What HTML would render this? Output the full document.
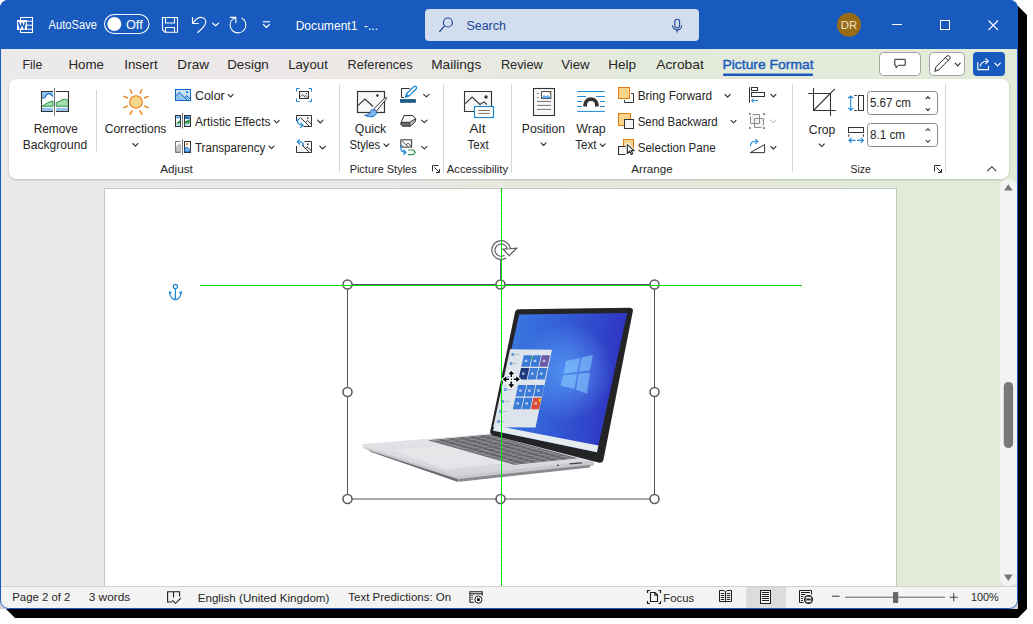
<!DOCTYPE html>
<html><head><meta charset="utf-8"><style>html,body{margin:0;padding:0;background:#fff;width:1033px;height:624px;overflow:hidden}svg{display:block}</style></head>
<body><svg width="1033" height="624" viewBox="0 0 1033 624" font-family='"Liberation Sans", sans-serif'><path d="M15 6 H1018 L1027 15 V609 L1018 618 H15 L6 609 V15 Z" fill="#000"/><rect x="0" y="598" width="10" height="11" fill="#cdcdcd"/><rect x="1008" y="598" width="10" height="11" fill="#cdcdcd"/><defs><linearGradient id="bg" x1="0" x2="1" y1="0" y2="0"><stop offset="0" stop-color="#ece9ea"/><stop offset="0.38" stop-color="#ebe8e6"/><stop offset="0.62" stop-color="#e4eadb"/><stop offset="1" stop-color="#e2ebd8"/></linearGradient><clipPath id="winclip"><rect x="0" y="0" width="1018" height="609" rx="8"/></clipPath><filter id="rs" x="-5%" y="-20%" width="110%" height="140%"><feDropShadow dx="0" dy="1" stdDeviation="1.3" flood-color="#000" flood-opacity="0.2"/></filter></defs><g clip-path="url(#winclip)"><rect x="0" y="0" width="1018" height="609" fill="url(#bg)"/><rect x="0" y="0" width="1018" height="49" fill="#185abd"/><rect x="9" y="79" width="1000" height="100" rx="8" fill="#fff" filter="url(#rs)"/><rect x="104.5" y="188.5" width="792" height="420" fill="#fff" stroke="#c6c6c6" stroke-width="1"/><rect x="1000" y="179" width="17" height="407" rx="8" fill="#f3f3f3"/><rect x="1003.8" y="382" width="9.3" height="66" rx="4.6" fill="#787878"/><path d="M1004 190.5 L1008.3 184.2 L1012.7 190.5 Z" fill="#777"/><path d="M1004 574.5 L1008.3 581 L1012.7 574.5 Z" fill="#777"/><rect x="0" y="586" width="1018" height="23" fill="#f3f3f3"/><rect x="0" y="586" width="1018" height="1" fill="#d2d2d2"/><circle cx="175.4" cy="286.4" r="2.1" fill="none" stroke="#2186d4" stroke-width="1.2"/><path d="M175.4 288.5 V299.6 M169.6 292.2 C169.8 296.8, 172.5 299.6, 175.4 299.6 C178.3 299.6, 181 296.8, 181.2 292.2" fill="none" stroke="#2186d4" stroke-width="1.2"/><path d="M169 290.6 L172.2 293 L169.2 294 Z M181.8 290.6 L178.6 293 L181.6 294 Z" fill="#2186d4"/><defs><linearGradient id="scr" x1="0" y1="0.3" x2="1" y2="0.45"><stop offset="0" stop-color="#3c80e2"/><stop offset="0.45" stop-color="#3460d8"/><stop offset="1" stop-color="#2e30c0"/></linearGradient><radialGradient id="glow" cx="0.55" cy="0.42" r="0.35"><stop offset="0" stop-color="#5aa6ff" stop-opacity="0.7"/><stop offset="1" stop-color="#6cb6ff" stop-opacity="0"/></radialGradient><linearGradient id="base" x1="0" y1="0" x2="0" y2="1"><stop offset="0" stop-color="#e6e6ea"/><stop offset="1" stop-color="#d2d3d8"/></linearGradient></defs><path d="M362.6 444.5 L490 434 L594 460.5 L594 465.5 L458 481.5 L369 451 Z" fill="#bfc0c5"/><path d="M369 450.5 L458 479 L458 482 L371 452 Z" fill="#6d6e74"/><path d="M458.5 478.5 L590 465 L590 467.5 L459 481.8 Z" fill="#8a8b90"/><path d="M362.6 444 L490 434 L594 460.5 L457 476.5 L362.6 446.5 Z" fill="url(#base)"/><path d="M362.6 446.5 L457 476.5 L594 460.5 L594 463.5 L458 479 L364 448.5 Z" fill="#c9cace"/><path d="M392 450 L450 444.5 L505 463 L445 469.5 Z" fill="#e9e9ed" opacity="0.7"/><path d="M428 440.2 L490 434.5 L577.5 458.3 L514 464.7 Z" fill="#606066"/><path d="M430.5 440.2 L437.2 439.6 L441.5 440.9 L434.9 441.5ZM440.9 439.3 L447.5 438.7 L451.9 439.9 L445.3 440.5ZM451.2 438.3 L457.8 437.7 L462.2 438.9 L455.6 439.6ZM461.6 437.4 L468.2 436.8 L472.6 438.0 L466.0 438.6ZM471.9 436.4 L478.5 435.8 L482.9 437.0 L476.3 437.6ZM482.2 435.5 L488.8 434.9 L493.3 436.1 L486.6 436.7ZM436.3 441.9 L442.9 441.2 L447.3 442.5 L440.6 443.1ZM446.6 440.9 L453.3 440.3 L457.6 441.5 L451.0 442.1ZM457.0 439.9 L463.6 439.3 L468.0 440.6 L461.4 441.2ZM467.3 439.0 L474.0 438.4 L478.4 439.6 L471.7 440.2ZM477.7 438.0 L484.3 437.4 L488.7 438.6 L482.1 439.2ZM488.0 437.1 L494.7 436.4 L499.1 437.7 L492.5 438.3ZM442.0 443.5 L448.7 442.9 L453.0 444.1 L446.4 444.7ZM452.4 442.5 L459.0 441.9 L463.4 443.1 L456.8 443.8ZM462.8 441.6 L469.4 440.9 L473.8 442.2 L467.1 442.8ZM473.1 440.6 L479.8 440.0 L484.2 441.2 L477.5 441.8ZM483.5 439.6 L490.1 439.0 L494.6 440.2 L487.9 440.8ZM493.9 438.7 L500.5 438.0 L504.9 439.2 L498.3 439.9ZM447.8 445.1 L454.4 444.5 L458.8 445.7 L452.1 446.4ZM458.1 444.1 L464.8 443.5 L469.2 444.8 L462.5 445.4ZM468.5 443.2 L475.2 442.5 L479.6 443.8 L472.9 444.4ZM478.9 442.2 L485.6 441.6 L490.0 442.8 L483.3 443.4ZM489.3 441.2 L495.9 440.6 L500.4 441.8 L493.7 442.4ZM499.7 440.2 L506.3 439.6 L510.8 440.8 L504.1 441.5ZM453.5 446.8 L460.2 446.1 L464.5 447.4 L457.9 448.0ZM463.9 445.8 L470.6 445.1 L474.9 446.4 L468.3 447.0ZM474.3 444.8 L481.0 444.2 L485.3 445.4 L478.7 446.0ZM484.7 443.8 L491.4 443.2 L495.8 444.4 L489.1 445.0ZM495.1 442.8 L501.8 442.2 L506.2 443.4 L499.5 444.0ZM505.5 441.8 L512.2 441.2 L516.6 442.4 L509.9 443.1ZM459.2 448.4 L465.9 447.8 L470.3 449.0 L463.6 449.6ZM469.6 447.4 L476.3 446.8 L480.7 448.0 L474.0 448.6ZM480.1 446.4 L486.7 445.8 L491.1 447.0 L484.5 447.6ZM490.5 445.4 L497.2 444.8 L501.6 446.0 L494.9 446.6ZM500.9 444.4 L507.6 443.8 L512.0 445.0 L505.3 445.6ZM511.3 443.4 L518.0 442.8 L522.4 444.0 L515.7 444.6ZM465.0 450.0 L471.6 449.4 L476.0 450.6 L469.3 451.3ZM475.4 449.0 L482.1 448.4 L486.5 449.6 L479.8 450.3ZM485.8 448.0 L492.5 447.4 L496.9 448.6 L490.2 449.2ZM496.3 447.0 L503.0 446.4 L507.4 447.6 L500.7 448.2ZM506.7 446.0 L513.4 445.4 L517.8 446.6 L511.1 447.2ZM517.1 445.0 L523.8 444.4 L528.3 445.6 L521.6 446.2ZM470.7 451.6 L477.4 451.0 L481.8 452.2 L475.1 452.9ZM481.2 450.6 L487.8 450.0 L492.2 451.2 L485.5 451.9ZM491.6 449.6 L498.3 449.0 L502.7 450.2 L496.0 450.9ZM502.1 448.6 L508.7 448.0 L513.2 449.2 L506.5 449.9ZM512.5 447.6 L519.2 447.0 L523.6 448.2 L516.9 448.8ZM523.0 446.6 L529.7 446.0 L534.1 447.2 L527.4 447.8ZM476.4 453.3 L483.1 452.6 L487.5 453.9 L480.8 454.5ZM486.9 452.3 L493.6 451.6 L498.0 452.8 L491.3 453.5ZM497.4 451.3 L504.1 450.6 L508.5 451.8 L501.8 452.5ZM507.8 450.2 L514.5 449.6 L519.0 450.8 L512.2 451.5ZM518.3 449.2 L525.0 448.6 L529.4 449.8 L522.7 450.4ZM528.8 448.2 L535.5 447.6 L539.9 448.8 L533.2 449.4ZM482.2 454.9 L488.9 454.3 L493.3 455.5 L486.5 456.2ZM492.7 453.9 L499.4 453.2 L503.8 454.5 L497.0 455.1ZM503.1 452.9 L509.9 452.2 L514.2 453.4 L507.5 454.1ZM513.6 451.8 L520.3 451.2 L524.7 452.4 L518.0 453.1ZM524.1 450.8 L530.8 450.2 L535.2 451.4 L528.5 452.0ZM534.6 449.8 L541.3 449.2 L545.7 450.4 L539.0 451.0ZM487.9 456.5 L494.6 455.9 L499.0 457.1 L492.3 457.8ZM498.4 455.5 L505.1 454.9 L509.5 456.1 L502.8 456.7ZM508.9 454.5 L515.6 453.8 L520.0 455.1 L513.3 455.7ZM519.4 453.5 L526.1 452.8 L530.5 454.0 L523.8 454.7ZM529.9 452.4 L536.6 451.8 L541.1 453.0 L534.3 453.6ZM540.4 451.4 L547.1 450.7 L551.6 451.9 L544.8 452.6ZM493.6 458.2 L500.4 457.5 L504.7 458.7 L498.0 459.4ZM504.2 457.1 L510.9 456.5 L515.3 457.7 L508.5 458.4ZM514.7 456.1 L521.4 455.4 L525.8 456.7 L519.1 457.3ZM525.2 455.1 L531.9 454.4 L536.3 455.6 L529.6 456.3ZM535.7 454.0 L542.5 453.4 L546.9 454.6 L540.1 455.2ZM546.2 453.0 L553.0 452.3 L557.4 453.5 L550.7 454.2ZM499.4 459.8 L506.1 459.1 L510.5 460.4 L503.7 461.0ZM509.9 458.8 L516.7 458.1 L521.0 459.3 L514.3 460.0ZM520.5 457.7 L527.2 457.1 L531.6 458.3 L524.8 458.9ZM531.0 456.7 L537.7 456.0 L542.1 457.2 L535.4 457.9ZM541.5 455.6 L548.3 455.0 L552.7 456.2 L545.9 456.8ZM552.1 454.6 L558.8 453.9 L563.2 455.1 L556.5 455.8ZM505.1 461.4 L511.9 460.8 L516.2 462.0 L509.5 462.7ZM515.7 460.4 L522.4 459.7 L526.8 460.9 L520.0 461.6ZM526.2 459.3 L533.0 458.7 L537.4 459.9 L530.6 460.6ZM536.8 458.3 L543.5 457.6 L547.9 458.8 L541.2 459.5ZM547.3 457.2 L554.1 456.6 L558.5 457.8 L551.7 458.4ZM557.9 456.2 L564.6 455.5 L569.1 456.7 L562.3 457.4ZM510.9 463.1 L517.6 462.4 L522.0 463.6 L515.2 464.3ZM521.4 462.0 L528.2 461.3 L532.6 462.6 L525.8 463.2ZM532.0 461.0 L538.8 460.3 L543.2 461.5 L536.4 462.2ZM542.6 459.9 L549.3 459.2 L553.7 460.4 L547.0 461.1ZM553.1 458.8 L559.9 458.2 L564.3 459.4 L557.5 460.0ZM563.7 457.8 L570.5 457.1 L574.9 458.3 L568.1 459.0Z" fill="#8c8c92"/><circle cx="557.8" cy="465.3" r="0.9" fill="#333"/><path d="M569.5 463.8 L582 462.8" stroke="#444" stroke-width="1.2"/><path d="M519 309.3 L629.5 307.8 Q633.5 307.8 632.8 311.5 L603.5 459.5 Q602.5 463.5 598.5 462.5 L493 435.5 Q489.5 434.5 490.3 431 L515 312.3 Q515.8 309.3 519 309.3 Z" fill="#242427"/><path d="M519.2 314.6 L627.2 312.9 L596.9 452.3 L493 430.6 Z" fill="url(#scr)"/><path d="M519.2 314.6 L627.2 312.9 L596.9 452.3 L493 430.6 Z" fill="url(#glow)"/><path d="M510 349.3 L552 349.8 L535.5 427.5 L493.2 427.3 Z" fill="#dde4ec"/><path d="M523.8 355.2 h8.2 l-2.51 11.6 h-8.2 Z" fill="#3b7ad6"/><rect x="524.7" y="359.7" width="2.6" height="2.4" fill="#fff" opacity="0.6"/><path d="M532.8 355.2 h8.2 l-2.51 11.6 h-8.2 Z" fill="#3b7ad6"/><rect x="533.7" y="359.7" width="2.6" height="2.4" fill="#fff" opacity="0.6"/><path d="M541.8 355.2 h8.2 l-2.51 11.6 h-8.2 Z" fill="#6a5aa8"/><rect x="542.7" y="359.7" width="2.6" height="2.4" fill="#fff" opacity="0.6"/><path d="M521.0 368.0 h8.2 l-2.51 11.6 h-8.2 Z" fill="#1d3a7e"/><rect x="522.0" y="372.5" width="2.6" height="2.4" fill="#fff" opacity="0.6"/><path d="M530.0 368.0 h8.2 l-2.51 11.6 h-8.2 Z" fill="#3b7ad6"/><rect x="531.0" y="372.5" width="2.6" height="2.4" fill="#fff" opacity="0.6"/><path d="M539.0 368.0 h8.2 l-2.51 11.6 h-8.2 Z" fill="#3b7ad6"/><rect x="540.0" y="372.5" width="2.6" height="2.4" fill="#fff" opacity="0.6"/><path d="M518.2 384.9 h8.2 l-2.51 11.6 h-8.2 Z" fill="#3b7ad6"/><rect x="519.1" y="389.4" width="2.6" height="2.4" fill="#fff" opacity="0.6"/><path d="M527.2 384.9 h8.2 l-2.51 11.6 h-8.2 Z" fill="#3b7ad6"/><rect x="528.1" y="389.4" width="2.6" height="2.4" fill="#fff" opacity="0.6"/><path d="M536.2 384.9 h8.2 l-2.51 11.6 h-8.2 Z" fill="#3b7ad6"/><rect x="537.1" y="389.4" width="2.6" height="2.4" fill="#fff" opacity="0.6"/><path d="M515.4 397.7 h8.2 l-2.51 11.6 h-8.2 Z" fill="#3b7ad6"/><rect x="516.4" y="402.2" width="2.6" height="2.4" fill="#fff" opacity="0.6"/><path d="M524.4 397.7 h8.2 l-2.51 11.6 h-8.2 Z" fill="#3b7ad6"/><rect x="525.4" y="402.2" width="2.6" height="2.4" fill="#fff" opacity="0.6"/><path d="M533.4 397.7 h8.2 l-2.51 11.6 h-8.2 Z" fill="#d84a3a"/><rect x="534.4" y="402.2" width="2.6" height="2.4" fill="#fff" opacity="0.6"/><rect x="538.5" y="399" width="2.4" height="2.8" fill="#e8c020"/><rect x="531" y="356.5" width="2.2" height="2.5" fill="#3fa050" opacity="0.9"/><rect x="511.6" y="353" width="2.6" height="3" fill="#4a8ad8" opacity="0.8"/><rect x="515.1" y="354" width="4" height="1" fill="#9aa8b8" opacity="0.7"/><rect x="509.7" y="362" width="2.6" height="3" fill="#4a8ad8" opacity="0.8"/><rect x="513.2" y="363" width="4" height="1" fill="#9aa8b8" opacity="0.7"/><rect x="506.7" y="376" width="2.6" height="3" fill="#4a8ad8" opacity="0.8"/><rect x="510.2" y="377" width="4" height="1" fill="#9aa8b8" opacity="0.7"/><rect x="504.1" y="388" width="2.6" height="3" fill="#4a8ad8" opacity="0.8"/><rect x="507.6" y="389" width="4" height="1" fill="#9aa8b8" opacity="0.7"/><rect x="501.5" y="400" width="2.6" height="3" fill="#4a8ad8" opacity="0.8"/><rect x="505.0" y="401" width="4" height="1" fill="#9aa8b8" opacity="0.7"/><rect x="499.3" y="410" width="2.6" height="3" fill="#4a8ad8" opacity="0.8"/><rect x="502.8" y="411" width="4" height="1" fill="#9aa8b8" opacity="0.7"/><rect x="497.2" y="420" width="2.6" height="3" fill="#4a8ad8" opacity="0.8"/><rect x="500.7" y="421" width="4" height="1" fill="#9aa8b8" opacity="0.7"/><path d="M493 430.6 L495.2 425.5 L598.5 445.5 L596.9 452.3 Z" fill="#e6ebf0"/><path d="M566 361 L580 358 L577.5 372 L563.5 373.5 Z M581.5 357.5 L593 355 L590 370.5 L579 371.8 Z M563 375.5 L577 374 L574.5 389 L560.5 385.5 Z M578.5 373.8 L590 372.5 L587 394 L576 389.5 Z" fill="#8fcfff" opacity="0.55"/><rect x="347.5" y="284.5" width="307" height="214.5" fill="none" stroke="#555" stroke-width="1"/><path d="M500.5 260 V284" stroke="#5c5c5c" stroke-width="1"/><path d="M508.83 248.48 A7.8 7.8 0 1 0 505.33 256.71" fill="none" stroke="#606060" stroke-width="4.4"/><path d="M503.2 249.2 L516.7 248.2 L509.1 255.6 Z" fill="#fff" stroke="#606060" stroke-width="1.3" stroke-linejoin="miter"/><path d="M508.83 248.48 A7.8 7.8 0 1 0 505.33 256.71" fill="none" stroke="#fff" stroke-width="2"/><circle cx="347.5" cy="284.5" r="4.5" fill="#fff" stroke="#5e5e5e" stroke-width="1.6"/><circle cx="347.5" cy="392" r="4.5" fill="#fff" stroke="#5e5e5e" stroke-width="1.6"/><circle cx="347.5" cy="499" r="4.5" fill="#fff" stroke="#5e5e5e" stroke-width="1.6"/><circle cx="500.5" cy="284.5" r="4.5" fill="#fff" stroke="#5e5e5e" stroke-width="1.6"/><circle cx="500.5" cy="499" r="4.5" fill="#fff" stroke="#5e5e5e" stroke-width="1.6"/><circle cx="654.5" cy="284.5" r="4.5" fill="#fff" stroke="#5e5e5e" stroke-width="1.6"/><circle cx="654.5" cy="392" r="4.5" fill="#fff" stroke="#5e5e5e" stroke-width="1.6"/><circle cx="654.5" cy="499" r="4.5" fill="#fff" stroke="#5e5e5e" stroke-width="1.6"/><rect x="200" y="285" width="602" height="1" fill="#00f800"/><rect x="501" y="188" width="1" height="398" fill="#00f800"/><path d="M200 285.5 H802" stroke="#0cc00c" stroke-width="1" stroke-dasharray="1.6 2.4"/><path d="M501.5 188 V586" stroke="#0cc00c" stroke-width="1" stroke-dasharray="1.6 2.4"/><g fill="#fff" stroke="#fff" stroke-width="2.2" stroke-linejoin="round"><g transform="translate(511.3 379.3) rotate(0)"><path d="M0 -8.6 L3 -5 H0.8 V-2.3 H-0.8 V-5 H-3 Z"/></g><g transform="translate(511.3 379.3) rotate(90)"><path d="M0 -8.6 L3 -5 H0.8 V-2.3 H-0.8 V-5 H-3 Z"/></g><g transform="translate(511.3 379.3) rotate(180)"><path d="M0 -8.6 L3 -5 H0.8 V-2.3 H-0.8 V-5 H-3 Z"/></g><g transform="translate(511.3 379.3) rotate(270)"><path d="M0 -8.6 L3 -5 H0.8 V-2.3 H-0.8 V-5 H-3 Z"/></g><circle cx="511.3" cy="379.3" r="1"/></g><g fill="#000"><g transform="translate(511.3 379.3) rotate(0)"><path d="M0 -8.6 L3 -5 H0.8 V-2.3 H-0.8 V-5 H-3 Z"/></g><g transform="translate(511.3 379.3) rotate(90)"><path d="M0 -8.6 L3 -5 H0.8 V-2.3 H-0.8 V-5 H-3 Z"/></g><g transform="translate(511.3 379.3) rotate(180)"><path d="M0 -8.6 L3 -5 H0.8 V-2.3 H-0.8 V-5 H-3 Z"/></g><g transform="translate(511.3 379.3) rotate(270)"><path d="M0 -8.6 L3 -5 H0.8 V-2.3 H-0.8 V-5 H-3 Z"/></g><rect x="510.7" y="378.7" width="1.2" height="1.2"/></g></g><rect x="0.5" y="0.5" width="1017" height="608" rx="8" fill="none" stroke="#185abd" stroke-width="1"/><rect x="425" y="9" width="274" height="32" rx="4" fill="#d2ddee"/><rect x="20.5" y="17.5" width="12" height="15" fill="none" stroke="#fff" stroke-width="1.1"/><rect x="21" y="20.7" width="11" height="1" fill="#fff"/><rect x="21" y="24.7" width="11" height="1" fill="#fff"/><rect x="21" y="28.7" width="11" height="1" fill="#fff"/><rect x="17" y="20" width="10" height="10" fill="#fff"/><path d="M18.5 22 L20 28 L22 23.5 L24 28 L25.5 22" fill="none" stroke="#185abd" stroke-width="1.4" stroke-linejoin="miter"/><rect x="104.5" y="14.5" width="44.5" height="19" rx="9.5" fill="none" stroke="#fff" stroke-width="1.1"/><circle cx="114.3" cy="24" r="7" fill="#fff"/><path d="M162.5 17.5 H177.5 V32.2 H165 L162.5 29.7 Z" fill="none" stroke="#fff" stroke-width="1.1"/><path d="M165.5 17.5 V23 H174.5 V17.5" fill="none" stroke="#fff" stroke-width="1.1"/><path d="M165.5 32.2 V27.5 H174.5 V32.2" fill="none" stroke="#fff" stroke-width="1.1"/><path d="M192.5 17.2 V23.5 H198.7" fill="none" stroke="#fff" stroke-width="1.2" stroke-linejoin="miter"/><path d="M193 23 C195.5 19.5, 198 17.4, 200.8 17.4 C203.8 17.4, 205.8 19.5, 205.8 22 C205.8 25.5, 202 29, 197.6 32.5" fill="none" stroke="#fff" stroke-width="1.1" stroke-linecap="round"/><path d="M212.60 23.10 L215.60 25.70 L218.60 23.10" fill="none" stroke="#fff" stroke-width="1.2" stroke-linejoin="round" stroke-linecap="round"/><path d="M241.95 18.16 A7.9 7.9 0 1 1 232.9 18.95 L235.5 17.8" fill="none" stroke="#fff" stroke-width="1.1" stroke-linecap="round"/><path d="M230.3 17.4 H235.8 V22.8" fill="none" stroke="#fff" stroke-width="1.1" stroke-linecap="round" stroke-linejoin="miter"/><path d="M262.8 21.8 H270" stroke="#fff" stroke-width="1.1"/><path d="M263.40 24.50 L266.40 27.50 L269.40 24.50" fill="none" stroke="#fff" stroke-width="1.1" stroke-linejoin="round" stroke-linecap="round"/><circle cx="447.9" cy="22.5" r="4.5" fill="none" stroke="#23499a" stroke-width="1.2"/><path d="M444.6 25.9 L439.6 31.5" stroke="#23499a" stroke-width="1.2" stroke-linecap="round"/><rect x="674.8" y="19.3" width="4.8" height="8.6" rx="2.4" fill="none" stroke="#23499a" stroke-width="1.1"/><path d="M672.5 25.3 A4.6 4.6 0 0 0 681.7 25.3" fill="none" stroke="#23499a" stroke-width="1.1"/><path d="M677.1 30 V32.6" stroke="#23499a" stroke-width="1.1"/><path d="M892 24.5 H902" stroke="#fff" stroke-width="1"/><rect x="940.5" y="20.5" width="9" height="9" fill="none" stroke="#fff" stroke-width="1"/><path d="M988.5 20.5 L998 30 M998 20.5 L988.5 30" stroke="#fff" stroke-width="1.1"/><rect x="879.5" y="52.5" width="41" height="23" rx="4" fill="#fff" stroke="#a3a3a3" stroke-width="1"/><path d="M894.8 59.3 H905.2 V65.3 H898.5 L896 68 V65.3 H894.8 Z" fill="none" stroke="#262626" stroke-width="1" stroke-linejoin="round"/><rect x="929.5" y="52.5" width="35" height="23" rx="4" fill="#fff" stroke="#a3a3a3" stroke-width="1"/><path d="M934.8 71.3 L936 66.8 L946.8 56.2 Q948.3 54.9 949.7 56.3 Q950.9 57.6 949.6 59 L938.9 69.8 Z M945.3 57.6 L948.3 60.6" fill="none" stroke="#262626" stroke-width="1" stroke-linejoin="round"/><path d="M955.20 63.20 L957.70 65.80 L960.20 63.20" fill="none" stroke="#262626" stroke-width="1.1" stroke-linejoin="round" stroke-linecap="round"/><rect x="973" y="52" width="32" height="24" rx="4" fill="#185abd"/><path d="M977.8 62 V69.6 H988.5 V66" fill="none" stroke="#fff" stroke-width="1.1" stroke-linejoin="round"/><path d="M980.3 66.5 C980.8 62.5, 983.5 61, 987.8 61.2" fill="none" stroke="#fff" stroke-width="1.1"/><path d="M985.5 58.5 L988.3 61.2 L985.5 64" fill="none" stroke="#fff" stroke-width="1.1" stroke-linejoin="round"/><path d="M994.75 63.10 L997.50 65.90 L1000.25 63.10" fill="none" stroke="#fff" stroke-width="1.3" stroke-linejoin="round" stroke-linecap="round"/><rect x="96.0" y="90" width="1" height="61.5" fill="#d4d4d4"/><rect x="339.0" y="84.5" width="1" height="88.0" fill="#d4d4d4"/><rect x="443.0" y="84.5" width="1" height="88.0" fill="#d4d4d4"/><rect x="511.0" y="84.5" width="1" height="88.0" fill="#d4d4d4"/><rect x="792.0" y="84.5" width="1" height="88.0" fill="#d4d4d4"/><rect x="945.0" y="84.5" width="1" height="88.0" fill="#d4d4d4"/><rect x="41.8" y="91.7" width="11.2" height="19.4" fill="#fff"/><path d="M42 91.7 H53 V98 C51.5 94.6, 50 93.5, 48.6 93.6 C46.6 93.7, 45.5 96, 44.6 97.8 H42 Z" fill="#92c4ee"/><path d="M42 98 H44.6 C45.5 96, 46.6 93.7, 48.6 93.6 C50 93.5, 51.5 94.6, 53 96.4" fill="none" stroke="#1066c4" stroke-width="1.1"/><path d="M42.3 106.2 C46 103.6, 49 101.8, 53 101 V106.2 Z" fill="#a8dbb0" stroke="#2a9444" stroke-width="1"/><path d="M56.2 102.5 C58.7 102.6, 61.2 99.4, 64.3 99.3 C66 99.3, 67 99.8, 68.3 100.5 V106.2 H56.2 Z" fill="#a8dbb0" stroke="#2a9444" stroke-width="1"/><rect x="42" y="107.8" width="11" height="3.3" fill="#92c4ee"/><rect x="56.2" y="107.8" width="12" height="3.3" fill="#92c4ee"/><path d="M53 91.5 H41.5 V111.5 H53 M56 91.5 H68.5 V111.5 H56" fill="none" stroke="#333" stroke-width="1.1"/><rect x="54" y="88" width="1" height="27.7" fill="#777"/><circle cx="136" cy="102" r="6.3" fill="#f7d98a" stroke="#e5760f" stroke-width="1.1"/><path d="M140.06 93.30 L141.75 89.67" stroke="#e5730c" stroke-width="1.3" stroke-linecap="round"/><path d="M131.94 93.30 L130.25 89.67" stroke="#e5730c" stroke-width="1.3" stroke-linecap="round"/><path d="M127.30 97.94 L123.67 96.25" stroke="#e5730c" stroke-width="1.3" stroke-linecap="round"/><path d="M127.30 106.06 L123.67 107.75" stroke="#e5730c" stroke-width="1.3" stroke-linecap="round"/><path d="M131.94 110.70 L130.25 114.33" stroke="#e5730c" stroke-width="1.3" stroke-linecap="round"/><path d="M140.06 110.70 L141.75 114.33" stroke="#e5730c" stroke-width="1.3" stroke-linecap="round"/><path d="M144.70 106.06 L148.33 107.75" stroke="#e5730c" stroke-width="1.3" stroke-linecap="round"/><path d="M144.70 97.94 L148.33 96.25" stroke="#e5730c" stroke-width="1.3" stroke-linecap="round"/><path d="M132.90 143.50 L135.40 146.10 L137.90 143.50" fill="none" stroke="#333" stroke-width="1.1" stroke-linejoin="round" stroke-linecap="round"/><rect x="175.5" y="89.5" width="15" height="11" fill="#c7e0f4" stroke="#1066c4" stroke-width="1"/><path d="M176 95.5 L179.5 92.3 L186.6 99.8 Z M184.5 97.6 L186.5 95.5 L190 98.6 V100 H186.6 Z M176 95.5 V100 H186.6" fill="#90c3ec"/><path d="M176 95.5 L179.5 92.3 L187 100 M184.6 97.6 L186.5 95.5 L190 98.8" fill="none" stroke="#1066c4" stroke-width="1"/><rect x="186.2" y="91.3" width="1.8" height="1.8" fill="#1066c4"/><path d="M228.10 94.40 L230.60 97.00 L233.10 94.40" fill="none" stroke="#333" stroke-width="1.1" stroke-linejoin="round" stroke-linecap="round"/><rect x="175.5" y="115.5" width="5" height="11" fill="#fff" stroke="#333" stroke-width="1"/><rect x="176.2" y="116.2" width="4" height="2.3" fill="#5aa8ec"/><path d="M176.2 123 L180.2 120 V123.6 H176.2 Z" fill="#2a9444"/><rect x="176.2" y="124" width="4" height="1.7" fill="#a9d3f5"/><rect x="184.5" y="115.5" width="6" height="11" fill="#fff" stroke="#333" stroke-width="1"/><rect x="184.9" y="116.2" width="4.8" height="2.8" fill="#1c6fc9"/><path d="M184.9 121.5 L187 120.5 L189.7 119 V123.6 H184.9 Z" fill="#2a9444"/><rect x="184.9" y="124" width="4.8" height="1.7" fill="#a9d3f5"/><rect x="182" y="113" width="1" height="15.6" fill="#777"/><path d="M274.20 120.30 L276.70 122.90 L279.20 120.30" fill="none" stroke="#333" stroke-width="1.1" stroke-linejoin="round" stroke-linecap="round"/><path d="M180.5 141.5 H175.5 V152.5 H180.5" fill="none" stroke="#777" stroke-width="1"/><path d="M176.2 147 L179.5 144 L180.6 145 V151.7 H176.2 Z" fill="#c9c9c9" stroke="#888" stroke-width="0.6"/><rect x="182" y="139.1" width="1" height="15.7" fill="#777"/><rect x="184.5" y="141.5" width="6" height="11" fill="#fff" stroke="#333" stroke-width="1"/><rect x="186.1" y="143.1" width="1.9" height="1.9" fill="#e5760f"/><path d="M184.9 148.5 L186.8 147 L189.9 150.2 V151.8 H184.9 Z" fill="#7ab8ee" stroke="#1066c4" stroke-width="0.9"/><path d="M269.00 146.00 L271.50 148.60 L274.00 146.00" fill="none" stroke="#333" stroke-width="1.1" stroke-linejoin="round" stroke-linecap="round"/><path d="M296.5 91.5 V88.5 H299.5 M308.5 88.5 H311.5 V91.5 M311.5 98.5 V101.5 H308.5 M299.5 101.5 H296.5 V98.5" fill="none" stroke="#1e88d4" stroke-width="1"/><rect x="299.5" y="91.5" width="9" height="7" fill="#f4f4f4" stroke="#333" stroke-width="1"/><path d="M300 96.8 L302.5 94.5 L305.5 97.8 M304.4 96.6 L305.6 95.4 L308 97.6" fill="none" stroke="#333" stroke-width="0.8"/><rect x="306" y="93" width="1" height="1" fill="#333"/><path d="M299 115.5 H311.5 V126.5 H303.5 M296.5 121 V115.5 H299" fill="#f6f6f6" stroke="#333" stroke-width="1"/><path d="M300.5 117.5 L309 126 M305 123 L307.5 120.5 L311 124" fill="none" stroke="#333" stroke-width="1"/><rect x="307" y="117.5" width="1.5" height="1.5" fill="#333"/><path d="M299.3 118.5 C296.3 120.3, 296.5 124.8, 302.8 125.3" fill="none" stroke="#1e88d4" stroke-width="1.2" stroke-linecap="round"/><path d="M300.8 123.1 L303 125.3 L300.8 127.4" fill="none" stroke="#1e88d4" stroke-width="1.2" stroke-linecap="round" stroke-linejoin="round"/><path d="M317.55 120.20 L320.30 123.00 L323.05 120.20" fill="none" stroke="#333" stroke-width="1.1" stroke-linejoin="round" stroke-linecap="round"/><path d="M304.5 141.5 H311.5 V152.5 H296.5 V146" fill="#f6f6f6" stroke="#333" stroke-width="1"/><path d="M302 145 L309 152 M305 148.8 L307 146.8 L311 150.5" fill="none" stroke="#333" stroke-width="1"/><rect x="307" y="143.5" width="1.5" height="1.5" fill="#333"/><path d="M297.5 141.8 C300.5 141, 303.5 142, 303.5 145.5" fill="none" stroke="#1e88d4" stroke-width="1.2" stroke-linecap="round"/><path d="M299.4 139.6 L297.3 141.8 L299.4 144" fill="none" stroke="#1e88d4" stroke-width="1.2" stroke-linecap="round" stroke-linejoin="round"/><path d="M319.85 146.20 L322.60 149.00 L325.35 146.20" fill="none" stroke="#333" stroke-width="1.1" stroke-linejoin="round" stroke-linecap="round"/><rect x="357.5" y="91.5" width="27" height="21" fill="#f7f7f7" stroke="#333" stroke-width="1.2"/><circle cx="377.4" cy="95.5" r="1.3" fill="#333"/><path d="M358.2 105.3 L365 99 L373 106.5" fill="none" stroke="#333" stroke-width="1.1"/><path d="M374 108.8 L385 97.8 Q386.8 96.8 386.6 98.6 L376.3 111.3 Z" fill="#fff" stroke="#333" stroke-width="1"/><path d="M372 109.8 C375.5 109.3, 377.5 111.3, 376.2 113.8 C374.5 117.5, 369.5 117.5, 364.6 115.3 C367.5 115, 369 114.5, 370 112.5 C370.6 111, 371 110, 372 109.8 Z" fill="#7fb5e8" stroke="#1066c4" stroke-width="1"/><path d="M383.90 143.90 L386.40 146.50 L388.90 143.90" fill="none" stroke="#333" stroke-width="1.1" stroke-linejoin="round" stroke-linecap="round"/><path d="M409.8 88.5 H401.5 V97.5 H404" fill="none" stroke="#333" stroke-width="1"/><path d="M405.6 97.2 L406.6 93.5 L413.7 86.7 Q414.9 85.6 416.1 86.7 Q417.2 87.9 416.1 89 L409.1 95.9 Z" fill="#fff" stroke="#1e88d4" stroke-width="1.3" stroke-linejoin="round"/><path d="M405.6 97.2 L406.6 93.5 L409.1 95.9 Z" fill="#1e88d4"/><rect x="400" y="99.1" width="15.9" height="3.7" fill="#1d5a82"/><path d="M423.65 94.30 L426.40 96.90 L429.15 94.30" fill="none" stroke="#333" stroke-width="1.1" stroke-linejoin="round" stroke-linecap="round"/><path d="M404 115.5 L413 115.5 L415.7 118.8 L409.6 122.3 L401.2 122.3 Z" fill="#f4f4f4"/><path d="M401.2 122.3 L409.6 122.3 L410.3 126.2 L402.6 126.2 L400.6 124.3 Z" fill="#6a6a6a"/><path d="M409.6 122.3 L415.7 118.8 L415.2 121.8 L410.3 126.2 Z" fill="#c4c4c4"/><path d="M404 115.5 L413 115.5 L415.7 118.8 L415.2 121.8 L410.3 126.2 L402.6 126.2 L400.6 124.3 L401.2 122.3 Z M401.2 122.3 H409.6 L415.7 118.8 M409.6 122.3 L410.3 126.2" fill="none" stroke="#333" stroke-width="1" stroke-linejoin="round"/><path d="M421.55 120.10 L424.30 122.70 L427.05 120.10" fill="none" stroke="#333" stroke-width="1.1" stroke-linejoin="round" stroke-linecap="round"/><rect x="400.8" y="139.8" width="10.8" height="7.3" fill="#f6f6f6" stroke="#333" stroke-width="1"/><path d="M402 141 L408 146.5 M406 145 L408 143.2 L411 146" fill="none" stroke="#333" stroke-width="0.8"/><path d="M402.2 145.5 C399.5 148, 400.5 152, 405.5 152.3" fill="none" stroke="#1e88d4" stroke-width="1.2" stroke-linecap="round"/><path d="M403.8 150 L406 152.3 L403.8 154.5" fill="none" stroke="#1e88d4" stroke-width="1.2" stroke-linecap="round" stroke-linejoin="round"/><path d="M408 150 H413.2 L415.4 152.3 L413.2 154.6 H407.8" fill="none" stroke="#2a9444" stroke-width="1.1" stroke-linejoin="round"/><path d="M421.55 146.30 L424.30 148.90 L427.05 146.30" fill="none" stroke="#333" stroke-width="1.1" stroke-linejoin="round" stroke-linecap="round"/><path d="M432.5 171.5 V165.5 H438.5" fill="none" stroke="#333" stroke-width="1"/><path d="M434.5 167.5 L439.5 172.5 M439.5 169.0 V172.5 H436.0" fill="none" stroke="#333" stroke-width="1"/><path d="M934.5 171.5 V165.5 H940.5" fill="none" stroke="#333" stroke-width="1"/><path d="M936.5 167.5 L941.5 172.5 M941.5 169.0 V172.5 H938.0" fill="none" stroke="#333" stroke-width="1"/><path d="M474.5 111.5 H464.5 V91.5 H491.5 V106" fill="#f7f7f7" stroke="#333" stroke-width="1.1"/><circle cx="486" cy="97" r="1.7" fill="#333"/><path d="M465.2 103.6 L472.1 97 L479.9 104.5 L484 101.9 L486.8 104.5" fill="none" stroke="#333" stroke-width="1.1"/><rect x="474.5" y="106.5" width="19" height="11" fill="#fff" stroke="#1e88d4" stroke-width="1.2"/><path d="M478.2 110.5 H490 M478.2 113.4 H490" stroke="#666" stroke-width="0.9"/><rect x="533.5" y="88.5" width="21" height="27" fill="#f8f8f8" stroke="#333" stroke-width="1.1"/><rect x="541.6" y="91.6" width="9.2" height="7" fill="#fff" stroke="#333" stroke-width="0.9"/><path d="M542 97.5 L544 95 L546 96.5 L548 95 L550.4 97.5 V98.2 H542 Z" fill="#5aa8ec"/><rect x="548.8" y="92.6" width="1" height="1" fill="#e5760f"/><path d="M537.1 93.5 H538.7 M537.1 97.5 H538.7 M537.1 101.5 H551 M537.1 105.4 H551 M537.1 109.4 H551" stroke="#666" stroke-width="0.9"/><path d="M541.00 142.90 L543.50 145.50 L546.00 142.90" fill="none" stroke="#333" stroke-width="1.1" stroke-linejoin="round" stroke-linecap="round"/><rect x="577.2" y="91.0" width="27.59999999999991" height="1" fill="#1e88d4"/><rect x="577.2" y="96.0" width="8.599999999999909" height="1" fill="#1e88d4"/><rect x="596" y="96.0" width="8.799999999999955" height="1" fill="#1e88d4"/><rect x="577.2" y="101.0" width="4.699999999999932" height="1" fill="#1e88d4"/><rect x="600" y="101.0" width="4.7999999999999545" height="1" fill="#1e88d4"/><rect x="577.2" y="106.0" width="4.699999999999932" height="1" fill="#1e88d4"/><rect x="600" y="106.0" width="4.7999999999999545" height="1" fill="#1e88d4"/><rect x="577.2" y="110.9" width="27.59999999999991" height="1" fill="#1e88d4"/><path d="M583.3 106.6 V104.9 A7.7 7.7 0 0 1 598.7 104.9 V106.6 H595 V104.9 A4 4 0 0 0 587 104.9 V106.6 Z" fill="#333"/><path d="M600.10 143.90 L602.60 146.50 L605.10 143.90" fill="none" stroke="#333" stroke-width="1.1" stroke-linejoin="round" stroke-linecap="round"/><path d="M631 93.5 H633.5 V102.5 H624.5 V100" fill="none" stroke="#333" stroke-width="1"/><rect x="618.5" y="87.5" width="11" height="11" fill="#f8d58a" stroke="#e07b10" stroke-width="1"/><path d="M725.10 94.50 L727.60 97.10 L730.10 94.50" fill="none" stroke="#333" stroke-width="1.1" stroke-linejoin="round" stroke-linecap="round"/><rect x="618.5" y="113.5" width="12" height="12" fill="#f8d58a" stroke="#e07b10" stroke-width="1"/><rect x="624.5" y="119.5" width="9" height="9" fill="#f5f5f5" stroke="#333" stroke-width="1"/><path d="M731.00 120.30 L733.50 122.90 L736.00 120.30" fill="none" stroke="#333" stroke-width="1.1" stroke-linejoin="round" stroke-linecap="round"/><rect x="623.5" y="139.5" width="10" height="9" fill="#f8d58a" stroke="#e07b10" stroke-width="1"/><rect x="619" y="147" width="6.5" height="7" fill="#f7f7f7"/><path d="M625.5 146.5 H618.5 V154.5 H625.5" fill="none" stroke="#333" stroke-width="1.1"/><path d="M627.3 144.6 V153.6 L629.6 151.2 L631.2 154.4 L632.7 153.7 L631.2 150.6 H634.2 Z" fill="#fff" stroke="#fff" stroke-width="3" stroke-linejoin="round"/><path d="M627.3 144.6 V153.6 L629.6 151.2 L631.2 154.4 L632.7 153.7 L631.2 150.6 H634.2 Z" fill="#fff" stroke="#333" stroke-width="1.2" stroke-linejoin="round"/><rect x="749" y="87.3" width="1" height="15.5" fill="#333"/><rect x="751.5" y="87.5" width="6" height="3" fill="#fff" stroke="#333" stroke-width="1"/><rect x="751.5" y="92.5" width="13" height="4" fill="#fff" stroke="#333" stroke-width="1"/><path d="M757.7 100.6 H751.6 M753.6 98.6 L751.6 100.6 L753.6 102.6" fill="none" stroke="#1e88d4" stroke-width="1" stroke-linecap="round" stroke-linejoin="round"/><path d="M770.90 94.40 L773.40 97.00 L775.90 94.40" fill="none" stroke="#333" stroke-width="1.1" stroke-linejoin="round" stroke-linecap="round"/><rect x="748.9" y="112.9" width="2" height="2" fill="#8e8e8e"/><rect x="763" y="112.9" width="2" height="2" fill="#8e8e8e"/><rect x="748.9" y="127" width="2" height="2" fill="#8e8e8e"/><rect x="763" y="127" width="2" height="2" fill="#8e8e8e"/><rect x="751" y="115" width="8.5" height="8.3" fill="#f3f3f3"/><rect x="755" y="119" width="8.3" height="8.3" fill="#f3f3f3"/><path d="M752.5 114.5 H759.5 V123.5 H750.5 V116.5" fill="none" stroke="#8e8e8e" stroke-width="1"/><path d="M761.5 127.5 H754.5 V118.5 H763.5 V125.5" fill="none" stroke="#8e8e8e" stroke-width="1"/><path d="M770.30 119.90 L773.30 122.70 L776.30 119.90" fill="none" stroke="#c4c4c4" stroke-width="1.1" stroke-linejoin="round" stroke-linecap="round"/><path d="M750.3 152.6 L764.6 144.6 V152.6 Z" fill="#fff" stroke="#333" stroke-width="1" stroke-linejoin="round"/><path d="M750.5 145.5 C750.3 142.3, 753 140.8, 757.5 141.4" fill="none" stroke="#1e88d4" stroke-width="1.1" stroke-linecap="round"/><path d="M755.6 139.3 L757.8 141.4 L755.6 143.5" fill="none" stroke="#1e88d4" stroke-width="1.1" stroke-linecap="round" stroke-linejoin="round"/><path d="M770.90 146.50 L773.40 149.10 L775.90 146.50" fill="none" stroke="#333" stroke-width="1.1" stroke-linejoin="round" stroke-linecap="round"/><path d="M813.5 88.1 V110.5 H835.8 M808.1 93.5 H830.5 V115.8 M813.5 110.5 L834.8 88.9" fill="none" stroke="#333" stroke-width="1.1"/><path d="M819.20 144.00 L821.70 146.60 L824.20 144.00" fill="none" stroke="#333" stroke-width="1.1" stroke-linejoin="round" stroke-linecap="round"/><path d="M850.7 95.8 V110.3 M848.5 98 L850.7 95.8 L852.9 98 M848.5 108.1 L850.7 110.3 L852.9 108.1" fill="none" stroke="#1e88d4" stroke-width="1.1" stroke-linecap="round" stroke-linejoin="round"/><path d="M854.3 95.5 H856.8 M854.3 110.5 H856.8" stroke="#333" stroke-width="1"/><rect x="858.5" y="95.5" width="5" height="15" fill="#fff" stroke="#333" stroke-width="1"/><rect x="848.5" y="127.5" width="15" height="5" fill="#fff" stroke="#333" stroke-width="1"/><path d="M848.8 134.3 V136.8 M863.4 134.3 V136.8" stroke="#333" stroke-width="1"/><path d="M849 140.4 H855 M857.5 140.4 H863.4 M851.2 138.2 L849 140.4 L851.2 142.6 M861.2 138.2 L863.4 140.4 L861.2 142.6" fill="none" stroke="#1e88d4" stroke-width="1.1" stroke-linecap="round" stroke-linejoin="round"/><rect x="867.5" y="91.5" width="70" height="23" rx="3" fill="#fff" stroke="#8a8a8a" stroke-width="1"/><rect x="867.5" y="123.5" width="70" height="23" rx="3" fill="#fff" stroke="#8a8a8a" stroke-width="1"/><path d="M925.8 99.0 L927.9 96.89999999999999 L930 99.0" fill="none" stroke="#333" stroke-width="1.1"/><path d="M925.8 108.39999999999999 L927.9 110.5 L930 108.39999999999999" fill="none" stroke="#333" stroke-width="1.1"/><path d="M925.8 130.79999999999998 L927.9 128.7 L930 130.79999999999998" fill="none" stroke="#333" stroke-width="1.1"/><path d="M925.8 140.2 L927.9 142.29999999999998 L930 140.2" fill="none" stroke="#333" stroke-width="1.1"/><path d="M987.3 171.2 L991.8 166.7 L996.3 171.2" fill="none" stroke="#333" stroke-width="1.1"/><path d="M172.3 602 H167.6 V591.8 H173.5 V597.5 M173.5 591.8 H179.6 V596.5" fill="none" stroke="#1e1e1e" stroke-width="1.1"/><path d="M172.2 600.1 L175.5 603.3 L180.8 598.2" fill="none" stroke="#1e1e1e" stroke-width="1.1"/><path d="M474 602.3 H469.9 V591.8 H482.2 V595.5" fill="none" stroke="#1e1e1e" stroke-width="1.1"/><path d="M469.9 593.8 H482.2" stroke="#1e1e1e" stroke-width="1.1"/><path d="M471.3 595.6 H472.8 M471.3 597.5 H472.8 M471.3 599.4 H472.8" stroke="#1e1e1e" stroke-width="0.9"/><circle cx="478.4" cy="599.6" r="3.6" fill="#f3f3f3" stroke="#1e1e1e" stroke-width="1"/><rect x="477" y="598.2" width="2.8" height="2.8" fill="#1e1e1e"/><path d="M647.5 593 V590.5 H650 M658.5 590.5 H660.5 V593 M660.5 601 V603.5 H658.5 M650 603.5 H647.5 V601" fill="none" stroke="#1e1e1e" stroke-width="1.2"/><path d="M650.5 601.5 V592.5 H655 L657.5 595 V601.5 Z M654.8 592.5 V595.2 H657.5" fill="none" stroke="#1e1e1e" stroke-width="1.1" stroke-linejoin="round"/><path d="M725.5 602.5 V601.5 H719.5 V590.5 H724 L725.5 592 L727 590.5 H731.5 V601.5 H725.5 M725.5 592 V601.5" fill="none" stroke="#1e1e1e" stroke-width="1" stroke-linejoin="round"/><path d="M721.2 593.5 H723.8 M727.2 593.5 H729.8" stroke="#1e1e1e" stroke-width="1" stroke-linecap="round"/><path d="M721.2 595.5 H723.8 M727.2 595.5 H729.8" stroke="#1e1e1e" stroke-width="1" stroke-linecap="round"/><path d="M721.2 597.5 H723.8 M727.2 597.5 H729.8" stroke="#1e1e1e" stroke-width="1" stroke-linecap="round"/><path d="M721.2 599.5 H723.8 M727.2 599.5 H729.8" stroke="#1e1e1e" stroke-width="1" stroke-linecap="round"/><rect x="746.2" y="587" width="39.8" height="21" fill="#dcdcdc"/><rect x="760.5" y="590.5" width="10" height="13" fill="#f6f6f6" stroke="#1e1e1e" stroke-width="1"/><path d="M762.3 592.5 H768.7" stroke="#1e1e1e" stroke-width="1" stroke-linecap="round"/><path d="M762.3 594.5 H768.7" stroke="#1e1e1e" stroke-width="1" stroke-linecap="round"/><path d="M762.3 596.5 H768.7" stroke="#1e1e1e" stroke-width="1" stroke-linecap="round"/><path d="M762.3 598.5 H768.7" stroke="#1e1e1e" stroke-width="1" stroke-linecap="round"/><path d="M762.3 600.5 H768.7" stroke="#1e1e1e" stroke-width="1" stroke-linecap="round"/><path d="M803.5 602.5 H799.5 V590.5 H811.5 V594.5" fill="none" stroke="#1e1e1e" stroke-width="1"/><path d="M801.3 592.5 H809.5 M801.3 594.5 H805 M801.3 596.5 H803 M801.3 598.5 H802.5 M801.3 600.5 H802.5" stroke="#1e1e1e" stroke-width="1" stroke-linecap="round"/><circle cx="808.5" cy="599.5" r="3.9" fill="#f3f3f3" stroke="#1e1e1e" stroke-width="1.4"/><rect x="804.8" y="598.6" width="7.4" height="1.8" fill="#1e1e1e"/><circle cx="806" cy="599.5" r="0.5" fill="#f3f3f3"/><circle cx="811" cy="599.5" r="0.5" fill="#f3f3f3"/><path d="M807.5 597 L808.5 596 L809.5 597 M807.5 602 L808.5 603 L809.5 602" fill="none" stroke="#1e1e1e" stroke-width="0.9"/><path d="M832 596.2 H839.6" stroke="#444" stroke-width="1.1"/><rect x="845" y="596.7" width="100" height="1" fill="#666"/><rect x="893" y="592.1" width="5.2" height="10.9" fill="#666"/><path d="M949.7 597.2 H957.8 M953.75 593.3 V601.2" stroke="#444" stroke-width="1.1"/><text x="48.58" y="29.4" font-size="12" fill="#fff" textLength="48.44" lengthAdjust="spacingAndGlyphs" >AutoSave</text><text x="125.98" y="29.4" font-size="12" fill="#fff" textLength="16.74" lengthAdjust="spacingAndGlyphs" >Off</text><text x="295.65" y="30.3" font-size="12.5" fill="#fff" textLength="61.80" lengthAdjust="spacingAndGlyphs" >Document1</text><text x="364.05" y="30.3" font-size="12.5" fill="#fff" textLength="13.90" lengthAdjust="spacingAndGlyphs" >-...</text><text x="466.45" y="29.9" font-size="12.5" fill="#20489a" textLength="39.50" lengthAdjust="spacingAndGlyphs" >Search</text><circle cx="849" cy="24.7" r="12" fill="#986c16"/><text x="840.84" y="29" font-size="11" fill="#f2e6cc" textLength="16.32" lengthAdjust="spacingAndGlyphs" >DR</text><text x="22.59" y="69.4" font-size="13.5" fill="#262626" textLength="19.72" lengthAdjust="spacingAndGlyphs" >File</text><text x="68.39" y="69.4" font-size="13.5" fill="#262626" textLength="35.62" lengthAdjust="spacingAndGlyphs" >Home</text><text x="124.19" y="69.4" font-size="13.5" fill="#262626" textLength="33.42" lengthAdjust="spacingAndGlyphs" >Insert</text><text x="177.39" y="69.4" font-size="13.5" fill="#262626" textLength="31.62" lengthAdjust="spacingAndGlyphs" >Draw</text><text x="227.19" y="69.4" font-size="13.5" fill="#262626" textLength="41.62" lengthAdjust="spacingAndGlyphs" >Design</text><text x="288.19" y="69.4" font-size="13.5" fill="#262626" textLength="39.62" lengthAdjust="spacingAndGlyphs" >Layout</text><text x="347.59" y="69.4" font-size="13.5" fill="#262626" textLength="64.92" lengthAdjust="spacingAndGlyphs" >References</text><text x="431.19" y="69.4" font-size="13.5" fill="#262626" textLength="50.12" lengthAdjust="spacingAndGlyphs" >Mailings</text><text x="500.89" y="69.4" font-size="13.5" fill="#262626" textLength="41.92" lengthAdjust="spacingAndGlyphs" >Review</text><text x="561.19" y="69.4" font-size="13.5" fill="#262626" textLength="28.42" lengthAdjust="spacingAndGlyphs" >View</text><text x="608.19" y="69.4" font-size="13.5" fill="#262626" textLength="27.92" lengthAdjust="spacingAndGlyphs" >Help</text><text x="656.19" y="69.4" font-size="13.5" fill="#262626" textLength="47.62" lengthAdjust="spacingAndGlyphs" >Acrobat</text><text x="722.49" y="69.4" font-size="13.5" fill="#185abd" textLength="91.12" lengthAdjust="spacingAndGlyphs" stroke="#185abd" stroke-width="0.4">Picture Format</text><rect x="723" y="73.5" width="90" height="2.5" rx="1" fill="#185abd"/><text x="33.68" y="133" font-size="12" fill="#262626" textLength="44.24" lengthAdjust="spacingAndGlyphs" >Remove</text><text x="22.68" y="148.8" font-size="12" fill="#262626" textLength="64.44" lengthAdjust="spacingAndGlyphs" >Background</text><text x="104.68" y="133" font-size="12" fill="#262626" textLength="61.74" lengthAdjust="spacingAndGlyphs" >Corrections</text><text x="194.98" y="100" font-size="12" fill="#262626" textLength="29.74" lengthAdjust="spacingAndGlyphs" >Color</text><text x="194.98" y="126.2" font-size="12" fill="#262626" textLength="75.54" lengthAdjust="spacingAndGlyphs" >Artistic Effects</text><text x="194.98" y="152.3" font-size="12" fill="#262626" textLength="70.24" lengthAdjust="spacingAndGlyphs" >Transparency</text><text x="160.23" y="172.8" font-size="11.2" fill="#262626" textLength="32.64" lengthAdjust="spacingAndGlyphs" >Adjust</text><text x="354.88" y="132.6" font-size="12" fill="#262626" textLength="31.34" lengthAdjust="spacingAndGlyphs" >Quick</text><text x="349.58" y="148.8" font-size="12" fill="#262626" textLength="30.54" lengthAdjust="spacingAndGlyphs" >Styles</text><text x="349.63" y="172.8" font-size="11.2" fill="#262626" textLength="67.04" lengthAdjust="spacingAndGlyphs" >Picture Styles</text><text x="469.28" y="132.6" font-size="12" fill="#262626" textLength="16.34" lengthAdjust="spacingAndGlyphs" >Alt</text><text x="467.58" y="148.8" font-size="12" fill="#262626" textLength="21.14" lengthAdjust="spacingAndGlyphs" >Text</text><text x="446.73" y="172.8" font-size="11.2" fill="#262626" textLength="61.44" lengthAdjust="spacingAndGlyphs" >Accessibility</text><text x="521.78" y="132.6" font-size="12" fill="#262626" textLength="43.34" lengthAdjust="spacingAndGlyphs" >Position</text><text x="576.28" y="132.6" font-size="12" fill="#262626" textLength="29.44" lengthAdjust="spacingAndGlyphs" >Wrap</text><text x="575.18" y="148.8" font-size="12" fill="#262626" textLength="21.24" lengthAdjust="spacingAndGlyphs" >Text</text><text x="637.68" y="100" font-size="12" fill="#262626" textLength="74.54" lengthAdjust="spacingAndGlyphs" >Bring Forward</text><text x="637.68" y="126.2" font-size="12" fill="#262626" textLength="80.04" lengthAdjust="spacingAndGlyphs" >Send Backward</text><text x="637.68" y="152.3" font-size="12" fill="#262626" textLength="78.04" lengthAdjust="spacingAndGlyphs" >Selection Pane</text><text x="631.33" y="172.8" font-size="11.2" fill="#262626" textLength="41.34" lengthAdjust="spacingAndGlyphs" >Arrange</text><text x="808.88" y="133.8" font-size="12" fill="#262626" textLength="26.34" lengthAdjust="spacingAndGlyphs" >Crop</text><text x="850.53" y="172.8" font-size="11.2" fill="#262626" textLength="20.34" lengthAdjust="spacingAndGlyphs" >Size</text><text x="869.88" y="106.9" font-size="12" fill="#262626" textLength="41.04" lengthAdjust="spacingAndGlyphs" >5.67 cm</text><text x="869.88" y="138.7" font-size="12" fill="#262626" textLength="35.14" lengthAdjust="spacingAndGlyphs" >8.1 cm</text><text x="12.31" y="601" font-size="11.5" fill="#262626" textLength="58.08" lengthAdjust="spacingAndGlyphs" >Page 2 of 2</text><text x="88.71" y="601" font-size="11.5" fill="#262626" textLength="41.58" lengthAdjust="spacingAndGlyphs" >3 words</text><text x="197.71" y="602" font-size="11.5" fill="#262626" textLength="131.68" lengthAdjust="spacingAndGlyphs" >English (United Kingdom)</text><text x="348.31" y="601" font-size="11.5" fill="#262626" textLength="102.88" lengthAdjust="spacingAndGlyphs" >Text Predictions: On</text><text x="663.31" y="601.7" font-size="11.5" fill="#262626" textLength="30.78" lengthAdjust="spacingAndGlyphs" >Focus</text><text x="970.91" y="601" font-size="11.5" fill="#262626" textLength="27.78" lengthAdjust="spacingAndGlyphs" >100%</text></svg></body></html>
